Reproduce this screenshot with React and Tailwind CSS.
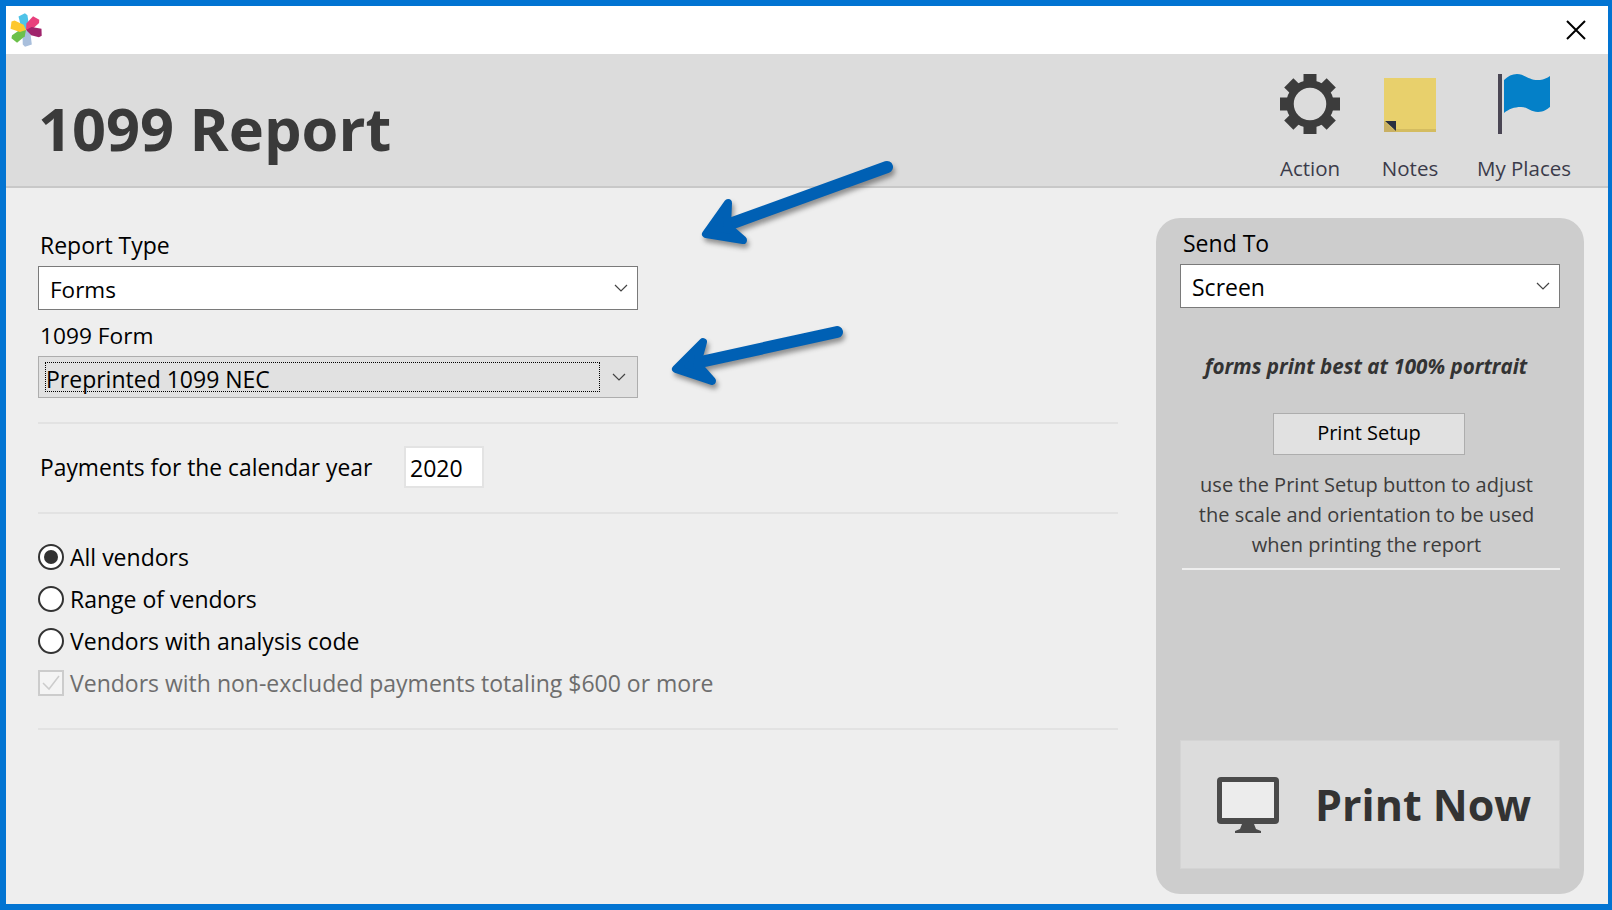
import React from "react";

function Chevron() {
  return (
    <svg width="14" height="8" viewBox="0 0 14 8" className="shrink-0" fill="none">
      <path d="M1 1 L7 7 L13 1" stroke="#444" strokeWidth="1.2" />
    </svg>
  );
}

function Logo() {
  const petals = [
    ["#4fc3e8", -14],
    ["#e8407c", 42],
    ["#a0246c", 100],
    ["#a9bfdc", 173],
    ["#6cc04a", 230],
    ["#fdc82f", 290],
  ];
  return (
    <svg width="34" height="34" viewBox="-17 -17 34 34" className="shrink-0">
      {petals.map(([c, r]) => (
        <polygon key={c} points="0,0 -4,-5 -4,-15 3,-16.500 5,-14 4,-4" fill={c} transform={`rotate(${r})`} />
      ))}
    </svg>
  );
}

function Gear() {
  const teeth = [0, 45, 90, 135, 180, 225, 270, 315];
  return (
    <svg width="60" height="60" viewBox="-30 -30 60 60">
      <circle r="20" fill="none" stroke="#3c3c3c" strokeWidth="7.500" />
      {teeth.map((a) => (
        <rect key={a} x="-6.500" y="-30" width="13" height="9" fill="#3c3c3c" transform={`rotate(${a})`} />
      ))}
    </svg>
  );
}

function Note() {
  return (
    <svg width="52" height="54" viewBox="0 0 52 54" className="mt-[2px]">
      <rect width="52" height="54" fill="#e8d06c" />
      <rect y="51" width="52" height="3" fill="#d4bc60" />
      <polygon points="0,43 12,54 0,54" fill="#c9b063" />
      <polygon points="1,43 12,43 12,53" fill="#2a3040" />
    </svg>
  );
}

function Flag() {
  return (
    <svg width="52" height="60" viewBox="0 0 52 60">
      <rect width="4" height="60" fill="#4a4654" />
      <path d="M6 6 C10 2 14 0 19 0 C27 0 31 7 42 6 C46 5.600 49 4 52 2 L52 33 C49 35 46 38 40 38 C32 38 30 33 23 33 C16 33 11 35 6 39 Z" fill="#0480c8" />
    </svg>
  );
}

function Monitor() {
  return (
    <svg width="62" height="56" viewBox="0 0 62 56">
      <rect width="62" height="47" rx="4" fill="#4a4a4a" />
      <rect x="5" y="5" width="52" height="36" fill="#ececec" />
      <path d="M25 47 H37 L39 52 L44 54 V56 H18 V54 L23 52 Z" fill="#4a4a4a" />
    </svg>
  );
}

function Header({ label, children, w }) {
  return (
    <div className={`flex flex-col items-center ${w}`}>
      <div className="h-[60px] flex items-center justify-center">{children}</div>
      <span className="mt-[19px] text-[20.500px] leading-[30px] text-[#3b3b4a] whitespace-nowrap">{label}</span>
    </div>
  );
}

function Radio({ checked, label }) {
  return (
    <div className="flex items-center h-[26px] gap-[6px]">
      <span className="w-[26px] h-[26px] rounded-full border-[2.500px] border-[#333] flex items-center justify-center bg-white shrink-0">
        {checked && <span className="w-[14px] h-[14px] rounded-full bg-[#333]" />}
      </span>
      <span className="text-[23px] leading-[30px] text-black">{label}</span>
    </div>
  );
}

function Arrow({ className, w, h, vb, line, head }) {
  const art = (color) => (
    <>
      <path d={line} stroke={color} strokeWidth="12" strokeLinecap="round" />
      <path d={head} fill={color} stroke={color} strokeWidth="8" strokeLinejoin="round" />
    </>
  );
  return (
    <svg width={w} height={h} viewBox={vb} fill="none" className={`absolute ${className}`}>
      <g transform="translate(2 4)" opacity="0.5" style={{ filter: "blur(2.500px)" }}>
        {art("#333")}
      </g>
      {art("#0060b4")}
    </svg>
  );
}

export default function App() {
  return (
    <div
      className="relative w-[1612px] h-[910px] bg-[#0274d2] pt-[6px] pl-[6px] pr-[4px] pb-[6px] flex flex-col overflow-hidden text-black"
      style={{ fontFamily: '"Open Sans", sans-serif' }}
    >
      <div className="h-[48px] bg-white flex items-center justify-between pl-[3px] pr-[21px] shrink-0">
        <Logo />
        <svg width="20" height="20" viewBox="0 0 20 20" className="mr-[1px]">
          <path d="M1 1 L19 19 M19 1 L1 19" stroke="#000" strokeWidth="2" />
        </svg>
      </div>

      <div className="h-[134px] bg-[#dcdcdc] border-b-2 border-[#c8c8c8] flex justify-between shrink-0 pl-[32px] pr-[38px]">
        <h1 className="mt-[38px] text-[59.500px] leading-[72px] font-bold text-[#3a3a3a]">1099 Report</h1>
        <div className="flex items-start mt-[20px]">
          <Header label="Action" w="w-[60px]"><Gear /></Header>
          <div className="w-[44px]" />
          <Header label="Notes" w="w-[52px]"><Note /></Header>
          <div className="w-[42px]" />
          <Header label="My Places" w="w-[92px]"><Flag /></Header>
        </div>
      </div>

      <div className="flex-1 bg-[#eeeeee] flex pl-[32px] pt-[30px] pr-[20px]">
        <div className="w-[1080px] text-[23px]">
          <div className="pl-[2px] pt-[12px] h-[48px] leading-[30px]">Report Type</div>
          <div className="w-[600px] h-[44px] bg-white border border-[#7a7a7a] flex items-center justify-between pl-[11px] pr-[9px]">
            <span className="text-[22.500px] mt-[3px]">Forms</span>
            <Chevron />
          </div>
          <div className="pl-[2px] h-[46px] pt-[11px] leading-[30px] text-[22.700px]">1099 Form</div>
          <div className="w-[600px] h-[42px] bg-[#e1e1e1] border border-[#adadad] flex items-center justify-between pl-[6px] pr-[11px]">
            <span className="w-[555px] h-[30px] border border-dotted border-black leading-[30px] whitespace-nowrap text-[23px] pt-[1px]">Preprinted 1099 NEC</span>
            <Chevron />
          </div>
          <div className="h-[2px] bg-[#e2e2e2] mt-[24px]" />
          <div className="flex items-center h-[42px] mt-[22px]">
            <span className="pl-[2px] w-[366px] text-[22.800px] pt-[2px]">Payments for the calendar year</span>
            <div className="w-[80px] h-[42px] bg-white border-2 border-[#e3e3e3] pl-[4px] leading-[40px]">2020</div>
          </div>
          <div className="h-[2px] bg-[#e2e2e2] mt-[24px]" />
          <div className="flex flex-col gap-[16px] mt-[30px]">
            <Radio checked label="All vendors" />
            <Radio label="Range of vendors" />
            <Radio label="Vendors with analysis code" />
            <div className="flex items-center h-[26px] gap-[6px]">
              <span className="w-[26px] h-[26px] border-2 border-[#cccccc] bg-[#f4f4f4] flex items-center justify-center shrink-0">
                <svg width="20" height="18" viewBox="0 0 20 18" fill="none">
                  <path d="M2 9 L8 15 L18 2" stroke="#cccccc" strokeWidth="1.500" />
                </svg>
              </span>
              <span className="leading-[30px] text-[#6d6d6d]">Vendors with non-excluded payments totaling $600 or more</span>
            </div>
          </div>
          <div className="h-[2px] bg-[#e2e2e2] mt-[32px]" />
        </div>

        <div className="ml-[38px] w-[428px] h-[676px] bg-[#cdcdcd] rounded-[24px] pt-[10px] pl-[24px] pr-[24px] flex flex-col">
          <div className="pl-[3px] h-[36px] text-[23px] leading-[30px]">Send To</div>
          <div className="w-[380px] h-[44px] bg-white border border-[#7a7a7a] flex items-center justify-between pl-[11px] pr-[9px] text-[23px] shrink-0">
            <span className="mt-[2px]">Screen</span>
            <Chevron />
          </div>
          <div className="mt-[43px] pr-[8px] text-center text-[20.600px] leading-[30px] font-bold italic text-[#333] whitespace-nowrap">forms print best at 100% portrait</div>
          <div className="ml-[93px] mt-[32px] w-[192px] h-[42px] bg-[#e1e1e1] border border-[#adadad] flex items-center justify-center text-[20px] pb-[2px] shrink-0">Print Setup</div>
          <div className="mt-[15px] pr-[7px] text-center text-[20px] leading-[30px] text-[#3c3c3c] whitespace-nowrap">
            use the Print Setup button to adjust<br />the scale and orientation to be used<br />when printing the report
          </div>
          <div className="h-[2px] bg-[#eeeeee] mt-[8px] ml-[2px]" />
          <div className="mt-[170px] w-[380px] h-[129px] bg-[#dcdcdc] border border-[#d4d4d4] flex items-center pl-[36px] gap-[36px] shrink-0">
            <Monitor />
            <span className="text-[43px] leading-[56px] font-bold text-[#333] whitespace-nowrap">Print Now</span>
          </div>
        </div>
      </div>

      <Arrow className="left-[690px] top-[155px]" w={210} h={100} vb="690 155 210 100" line="M887 167 L730 224" head="M728 203 L706 234 L743 240 L727 226 Z" />
      <Arrow className="left-[660px] top-[320px]" w={190} h={80} vb="660 320 190 80" line="M837 332 L705 361" head="M703 342 L676 369 L712 381 L697 364 Z" />
    </div>
  );
}
